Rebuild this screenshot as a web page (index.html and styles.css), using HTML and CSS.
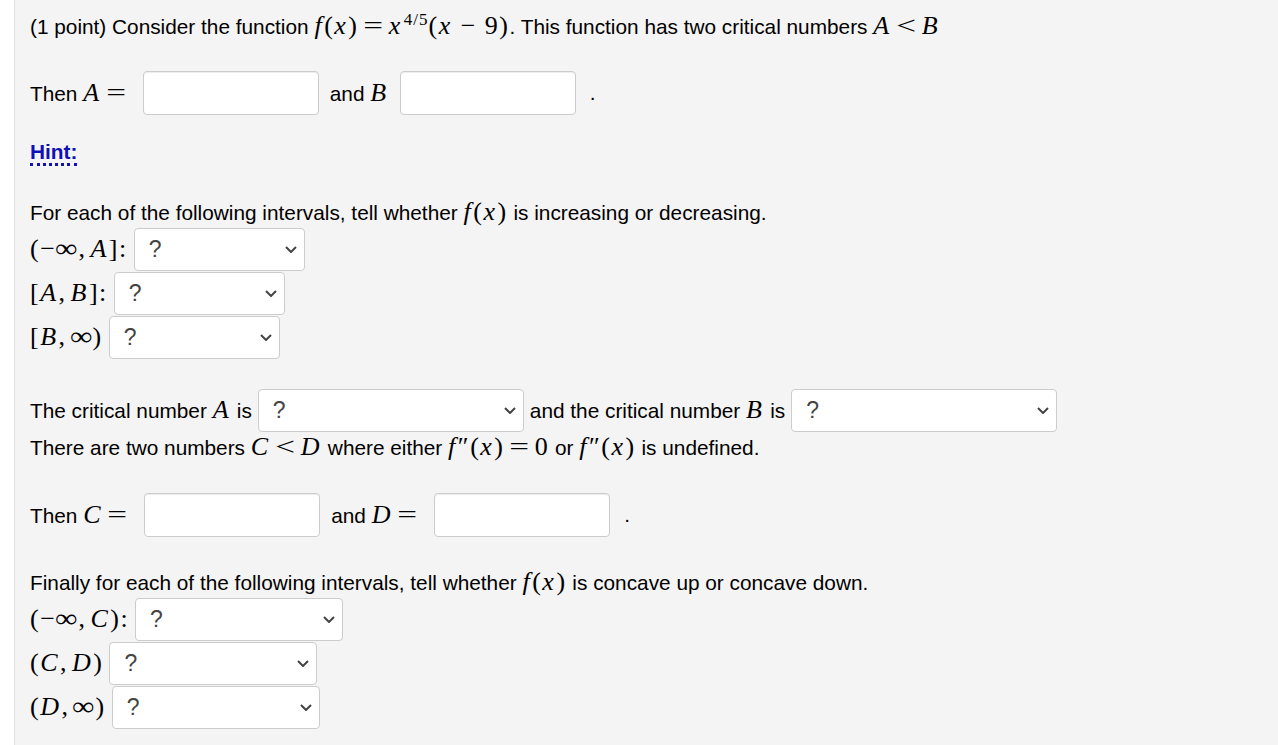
FILE: index.html
```html
<!DOCTYPE html>
<html lang="en">
<head>
    <meta charset="UTF-8">
    <title>Critical numbers problem</title>
    <link rel="stylesheet" href="styles.css">
</head>
<body>
    <div class="problem">
        <!-- statement -->
        <div class="text-line">(1 point) Consider the function <span class="m"><i>f</i>(<i>x</i>)<span class="rel">=</span><i>x</i><sup>4/5</sup>(<i>x</i><span class="bin">−</span>9)</span>. This function has two critical numbers <span class="m"><i>A</i><span class="rel">&lt;</span><i>B</i></span></div>

        <div class="row row-answers">
            <span>Then <span class="m"><i>A</i><span class="rel">=</span></span></span>
            <input type="text" class="answer">
            <span>and <span class="m"><i>B</i></span></span>
            <input type="text" class="answer">
            <span class="dot">.</span>
        </div>

        <div class="text-line hint-line"><a class="hint">Hint:</a></div>

        <div class="text-line gap-top">For each of the following intervals, tell whether <span class="m"><i>f</i>(<i>x</i>)</span> is increasing or decreasing.</div>
        <div class="row sel-row">
            <span class="m">(−<span class="inf">∞</span>,<span class="thin"></span><i>A</i>]:</span>
            <span class="sel w-inc"><select><option>?</option><option>increasing</option><option>decreasing</option></select><svg class="chev" viewBox="0 0 12 7"><path d="M1 1 L6 6 L11 1"/></svg></span>
        </div>
        <div class="row sel-row">
            <span class="m">[<i>A</i>,<span class="thin"></span><i>B</i>]:</span>
            <span class="sel w-inc"><select><option>?</option><option>increasing</option><option>decreasing</option></select><svg class="chev" viewBox="0 0 12 7"><path d="M1 1 L6 6 L11 1"/></svg></span>
        </div>
        <div class="row sel-row">
            <span class="m">[<i>B</i>,<span class="thin"></span><span class="inf">∞</span>)</span>
            <span class="sel w-inc"><select><option>?</option><option>increasing</option><option>decreasing</option></select><svg class="chev" viewBox="0 0 12 7"><path d="M1 1 L6 6 L11 1"/></svg></span>
        </div>

        <div class="row row-critical">
            <span>The critical number <span class="m"><i>A</i></span> is</span>
            <span class="sel w-crit"><select><option>?</option><option>a local maximum</option><option>a local minimum</option><option>neither</option></select><svg class="chev" viewBox="0 0 12 7"><path d="M1 1 L6 6 L11 1"/></svg></span>
            <span>and the critical number <span class="m"><i>B</i></span> is</span>
            <span class="sel w-crit"><select><option>?</option><option>a local maximum</option><option>a local minimum</option><option>neither</option></select><svg class="chev" viewBox="0 0 12 7"><path d="M1 1 L6 6 L11 1"/></svg></span>
        </div>
        <div class="text-line">There are two numbers <span class="m"><i>C</i><span class="rel">&lt;</span><i>D</i></span> where either <span class="m"><i>f</i>″(<i>x</i>)<span class="rel">=</span>0</span> or <span class="m"><i>f</i>″(<i>x</i>)</span> is undefined.</div>

        <div class="row row-answers second">
            <span>Then <span class="m"><i>C</i><span class="rel">=</span></span></span>
            <input type="text" class="answer">
            <span>and <span class="m"><i>D</i><span class="rel">=</span></span></span>
            <input type="text" class="answer">
            <span class="dot">.</span>
        </div>

        <div class="text-line gap-top">Finally for each of the following intervals, tell whether <span class="m"><i>f</i>(<i>x</i>)</span> is concave up or concave down.</div>
        <div class="row sel-row">
            <span class="m">(−<span class="inf">∞</span>,<span class="thin"></span><i>C</i>):</span>
            <span class="sel w-con"><select><option>?</option><option>concave up</option><option>concave down</option></select><svg class="chev" viewBox="0 0 12 7"><path d="M1 1 L6 6 L11 1"/></svg></span>
        </div>
        <div class="row sel-row">
            <span class="m">(<i>C</i>,<span class="thin"></span><i>D</i>)</span>
            <span class="sel w-con"><select><option>?</option><option>concave up</option><option>concave down</option></select><svg class="chev" viewBox="0 0 12 7"><path d="M1 1 L6 6 L11 1"/></svg></span>
        </div>
        <div class="row sel-row">
            <span class="m">(<i>D</i>,<span class="thin"></span><span class="inf">∞</span>)</span>
            <span class="sel w-con"><select><option>?</option><option>concave up</option><option>concave down</option></select><svg class="chev" viewBox="0 0 12 7"><path d="M1 1 L6 6 L11 1"/></svg></span>
        </div>
    </div>
</body>
</html>
```

FILE: styles.css
```css
body {
    margin: 0;
    background-color: #fff;
    font-family: Arial, "Liberation Sans", sans-serif;
    font-size: 20.8px;
    color: #000;
}
.problem {
    margin-left: 14px;
    min-height: 745px;
    box-sizing: border-box;
    padding: 11px 15px 0;
    background-color: #f4f4f4;
    border-left: 1px solid #e2e2e2;
}

/* math bits */
.m {
    font-family: "Liberation Serif", "DejaVu Serif", serif;
    font-size: 26px;
    letter-spacing: 1.5px;
    white-space: nowrap;
}
.m i {
    font-style: italic;
    padding-right: 1px;
}
.m sup {
    font-size: 17px;
    letter-spacing: 1px;
    vertical-align: 9px;
    line-height: 0;
    margin-left: 1px;
}
.rel {
    display: inline-block;
    padding: 0 7px;
    transform: scaleX(1.35);
}
.bin {
    padding: 0 8px;
}
.thin {
    display: inline-block;
    width: 4px;
}
.inf {
    display: inline-block;
    padding: 0 1px;
    transform: scaleX(1.2);
}

.text-line {
    height: 30px;
    line-height: 30px;
    white-space: nowrap;
}
.gap-top {
    margin-top: 30px;
}
.row {
    display: flex;
    align-items: center;
    height: 44px;
    white-space: nowrap;
}
.row-answers {
    margin-top: 30px;
    gap: 11px;
}
.row-answers.second {
    margin-top: 31px;
}
.row-answers .dot {
    margin-left: 3px;
}
.hint-line {
    margin-top: 22px;
}
.hint {
    color: #1010b8;
    font-weight: bold;
    text-decoration: none;
    border-bottom: 3px dotted #1010b8;
    cursor: pointer;
}
.sel-row {
    gap: 6px;
}
.row-critical {
    margin-top: 29px;
    gap: 6px;
}

input.answer {
    width: 176px;
    height: 44px;
    box-sizing: border-box;
    background-color: #fff;
    border: 1px solid #ccc;
    border-radius: 4px;
    box-shadow: inset 0 1px 1px rgba(0, 0, 0, .075);
    font: inherit;
    padding: 4px 8px;
}

.sel {
    position: relative;
    display: inline-block;
    height: 43px;
}
.sel select {
    appearance: none;
    -webkit-appearance: none;
    width: 100%;
    height: 43px;
    box-sizing: border-box;
    background-color: #fff;
    border: 1px solid #ccc;
    border-radius: 4px;
    font-family: Arial, "Liberation Sans", sans-serif;
    font-size: 23px;
    color: #444;
    padding: 0 30px 0 14px;
}
.chev {
    position: absolute;
    right: 8px;
    top: 18px;
    width: 12px;
    height: 7px;
    fill: none;
    stroke: #444;
    stroke-width: 2;
    pointer-events: none;
}
.w-inc { width: 171px; }
.w-crit { width: 266px; }
.w-con { width: 208px; }
```
